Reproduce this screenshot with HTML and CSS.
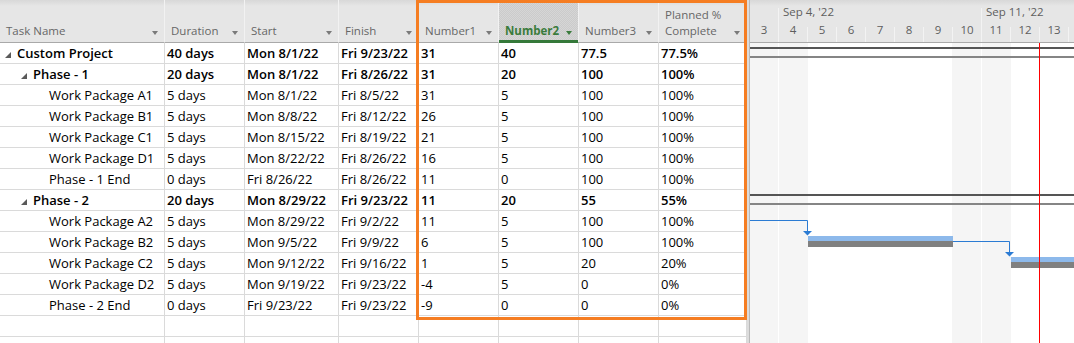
FILE: index.html
```html
<!DOCTYPE html>
<html lang="en">
<head>
<meta charset="utf-8">
<title>Gantt Chart</title>
<link rel="stylesheet" href="styles.css">
</head>
<body>
<div class="app">
  <div class="sheet">
    <div class="h"><span>Task Name</span><i class="dd"></i></div>
    <div class="h"><span>Duration</span><i class="dd"></i></div>
    <div class="h"><span>Start</span><i class="dd"></i></div>
    <div class="h"><span>Finish</span><i class="dd"></i></div>
    <div class="h"><span>Number1</span><i class="dd"></i></div>
    <div class="h sel"><span>Number2</span><i class="dd"></i></div>
    <div class="h"><span>Number3</span><i class="dd"></i></div>
    <div class="h"><span>Planned %<br>Complete</span><i class="dd"></i></div>

    <div class="c n l0 b"><svg class="tw" width="6" height="6" viewBox="0 0 6 6"><polygon points="6,0 6,6 0,6"/></svg>Custom Project</div>
    <div class="c b">40 days</div><div class="c b">Mon 8/1/22</div><div class="c b">Fri 9/23/22</div>
    <div class="c b">31</div><div class="c b">40</div><div class="c b">77.5</div><div class="c b">77.5%</div>

    <div class="c n l1 b"><svg class="tw" width="6" height="6" viewBox="0 0 6 6"><polygon points="6,0 6,6 0,6"/></svg>Phase - 1</div>
    <div class="c b">20 days</div><div class="c b">Mon 8/1/22</div><div class="c b">Fri 8/26/22</div>
    <div class="c b">31</div><div class="c b">20</div><div class="c b">100</div><div class="c b">100%</div>

    <div class="c n l2">Work Package A1</div>
    <div class="c">5 days</div><div class="c">Mon 8/1/22</div><div class="c">Fri 8/5/22</div>
    <div class="c">31</div><div class="c">5</div><div class="c">100</div><div class="c">100%</div>

    <div class="c n l2">Work Package B1</div>
    <div class="c">5 days</div><div class="c">Mon 8/8/22</div><div class="c">Fri 8/12/22</div>
    <div class="c">26</div><div class="c">5</div><div class="c">100</div><div class="c">100%</div>

    <div class="c n l2">Work Package C1</div>
    <div class="c">5 days</div><div class="c">Mon 8/15/22</div><div class="c">Fri 8/19/22</div>
    <div class="c">21</div><div class="c">5</div><div class="c">100</div><div class="c">100%</div>

    <div class="c n l2">Work Package D1</div>
    <div class="c">5 days</div><div class="c">Mon 8/22/22</div><div class="c">Fri 8/26/22</div>
    <div class="c">16</div><div class="c">5</div><div class="c">100</div><div class="c">100%</div>

    <div class="c n l2">Phase - 1 End</div>
    <div class="c">0 days</div><div class="c">Fri 8/26/22</div><div class="c">Fri 8/26/22</div>
    <div class="c">11</div><div class="c">0</div><div class="c">100</div><div class="c">100%</div>

    <div class="c n l1 b"><svg class="tw" width="6" height="6" viewBox="0 0 6 6"><polygon points="6,0 6,6 0,6"/></svg>Phase - 2</div>
    <div class="c b">20 days</div><div class="c b">Mon 8/29/22</div><div class="c b">Fri 9/23/22</div>
    <div class="c b">11</div><div class="c b">20</div><div class="c b">55</div><div class="c b">55%</div>

    <div class="c n l2">Work Package A2</div>
    <div class="c">5 days</div><div class="c">Mon 8/29/22</div><div class="c">Fri 9/2/22</div>
    <div class="c">11</div><div class="c">5</div><div class="c">100</div><div class="c">100%</div>

    <div class="c n l2">Work Package B2</div>
    <div class="c">5 days</div><div class="c">Mon 9/5/22</div><div class="c">Fri 9/9/22</div>
    <div class="c">6</div><div class="c">5</div><div class="c">100</div><div class="c">100%</div>

    <div class="c n l2">Work Package C2</div>
    <div class="c">5 days</div><div class="c">Mon 9/12/22</div><div class="c">Fri 9/16/22</div>
    <div class="c">1</div><div class="c">5</div><div class="c">20</div><div class="c">20%</div>

    <div class="c n l2">Work Package D2</div>
    <div class="c">5 days</div><div class="c">Mon 9/19/22</div><div class="c">Fri 9/23/22</div>
    <div class="c">-4</div><div class="c">5</div><div class="c">0</div><div class="c">0%</div>

    <div class="c n l2">Phase - 2 End</div>
    <div class="c">0 days</div><div class="c">Fri 9/23/22</div><div class="c">Fri 9/23/22</div>
    <div class="c">-9</div><div class="c">0</div><div class="c">0</div><div class="c">0%</div>

    <div class="c"></div><div class="c"></div><div class="c"></div><div class="c"></div>
    <div class="c"></div><div class="c"></div><div class="c"></div><div class="c"></div>
    <div class="c"></div><div class="c"></div><div class="c"></div><div class="c"></div>
    <div class="c"></div><div class="c"></div><div class="c"></div><div class="c"></div>
  </div>
  <div class="divider"></div>
  <div class="gantt">
    <div class="gh">
      <div class="tier top">
        <div class="wk first"></div>
        <div class="wk full">Sep 4, '22</div>
        <div class="wk">Sep 11, '22</div>
      </div>
      <div class="tier bottom">
        <div class="day first">3</div>
        <div class="day wb">4</div>
        <div class="day">5</div>
        <div class="day">6</div>
        <div class="day">7</div>
        <div class="day">8</div>
        <div class="day">9</div>
        <div class="day">10</div>
        <div class="day wb">11</div>
        <div class="day">12</div>
        <div class="day">13</div>
        <div class="day"></div>
      </div>
    </div>
    <div class="gb">
      <div class="shade s1"></div>
      <div class="shade s2"></div>
      <div class="shade s3"></div>
      <div class="shade s4"></div>
      <div class="sum r0"></div>
      <div class="sum r7"></div>
      <div class="bar b2"></div>
      <div class="bar c2"></div>
      <svg class="links" width="324" height="300" viewBox="0 0 324 300">
        <path d="M0 177.5 H57.5 V188" />
        <polygon points="53,188 62,188 57.5,192.5" />
        <path d="M203 198.5 H259.5 V209" />
        <polygon points="255,209 264,209 259.5,213.5" />
      </svg>
      <div class="today"></div>
    </div>
  </div>
  <div class="focus"></div>
</div>
</body>
</html>
```
FILE: styles.css
```css
* { box-sizing: border-box; }
html, body { margin: 0; padding: 0; background: #fff; }
body {
  font-family: "Open Sans", "Noto Sans", "Liberation Sans", sans-serif;
  color: #000;
  width: 1074px;
  height: 343px;
  overflow: hidden;
}
.app {
  position: relative;
  display: flex;
  height: 343px;
  overflow: hidden;
}

/* ---------- sheet ---------- */
.sheet {
  flex: 0 0 747px;
  display: grid;
  grid-template-columns: 165px 80px 94px 80px 80px 80px 80px 88px;
  grid-template-rows: 43px;
  grid-auto-rows: 21px;
  align-content: start;
}
.h {
  display: flex;
  align-items: flex-end;
  justify-content: space-between;
  padding: 0 6px 3px 6px;
  background: linear-gradient(#d8d8d8, #e6e6e6 6px, #e6e6e6);
  border-right: 1px solid #f2f2f2;
  border-bottom: 1px solid #a9a9a9;
  color: #666;
  font-size: 11.5px;
  line-height: 16px;
  white-space: nowrap;
}
.dd {
  display: block;
  width: 0;
  height: 0;
  margin-bottom: 4px;
  border-left: 3.5px solid transparent;
  border-right: 3.5px solid transparent;
  border-top: 4px solid #7a7a7a;
}
.h.sel {
  background: repeating-conic-gradient(#d6d6d6 0% 25%, #cbcbcb 0% 50%) 0 0 / 2px 2px;
  border-bottom-color: #35793a;
  box-shadow: inset 0 -2px 0 #35793a;
  color: #3a7b3c;
  font-weight: 700;
}
.h.sel .dd { border-top-color: #3a7b3c; }

.c {
  display: flex;
  align-items: center;
  padding-left: 2px;
  border-right: 1px solid #dadada;
  border-bottom: 1px solid #dadada;
  font-size: 13px;
  line-height: 20px;
  white-space: nowrap;
  overflow: hidden;
}
.c.b { font-weight: 600; }
.c.n.l0 { padding-left: 5px; }
.c.n.l1 { padding-left: 21px; }
.c.n.l2 { padding-left: 49px; }
.tw {
  flex: 0 0 6px;
  margin: 3px 6px 0 0;
  fill: #5a5a5a;
}

.divider {
  flex: 0 0 2px;
  background: #dcdcdc;
}

/* ---------- gantt ---------- */
.gantt {
  flex: 1 1 auto;
  display: flex;
  flex-direction: column;
  border-left: 1px solid #b9b9b9;
  overflow: hidden;
}
.gh {
  flex: 0 0 43px;
  display: flex;
  flex-direction: column;
  background: linear-gradient(#d8d8d8, #e6e6e6 6px, #e6e6e6);
  border-bottom: 1px solid #a9a9a9;
  color: #5e5e5e;
  font-size: 11.5px;
  white-space: nowrap;
}
.tier { display: flex; height: 21px; }
.wk {
  flex: 0 0 auto;
  padding: 3px 0 0 5px;
  line-height: 18px;
  background: linear-gradient(#f3f3f3, #f3f3f3) no-repeat 0 8px / 1px 100%;
}
.wk.first { width: 28px; background: none; }
.wk.full { width: 203px; }
.wk:last-child { width: 100px; }
.day {
  flex: 0 0 29px;
  text-align: center;
  padding-left: 1px;
  line-height: 18px;
  background: linear-gradient(#f3f3f3, #f3f3f3) no-repeat 0 6px / 1px 100%;
}
.day.wb { background: linear-gradient(#f3f3f3, #f3f3f3) no-repeat 0 0 / 1px 100%; }
.day.first { flex-basis: 28px; padding-left: 0; background: none; }

.gb {
  position: relative;
  flex: 1 1 auto;
}
.shade {
  position: absolute;
  top: 0;
  bottom: 0;
  background: #f5f5f5;
}
.s1 { left: 0; width: 28px; }
.s2 { left: 29px; width: 29px; }
.s3 { left: 202px; width: 29px; }
.s4 { left: 232px; width: 29px; }

.sum {
  position: absolute;
  left: 0;
  right: 0;
  height: 11px;
  border-top: 2px solid #555;
  border-bottom: 2px solid #858585;
}
.r0 { top: 4px; }
.r7 { top: 151px; }

.bar {
  position: absolute;
  height: 11px;
  background: linear-gradient(#8db9eb 0 5px, #808080 5px 11px);
}
.b2 { left: 58px; width: 145px; top: 193px; }
.c2 { left: 261px; width: 80px; top: 214px; }

.links {
  position: absolute;
  left: 0;
  top: 0;
}
.links path { fill: none; stroke: #2b7bd3; stroke-width: 1; }
.links polygon { fill: #2b7bd3; }

.today {
  position: absolute;
  left: 289px;
  top: 0;
  bottom: 0;
  width: 1px;
  background: #ff0000;
}

/* highlight box drawn over the number columns */
.focus {
  position: absolute;
  left: 416px;
  top: 0;
  width: 331px;
  height: 320px;
  border: 3px solid #f57d22;
  pointer-events: none;
}
```
